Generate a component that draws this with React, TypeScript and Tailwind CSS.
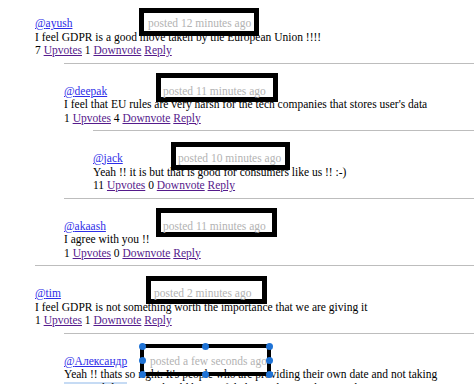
import { ReactNode } from "react";

interface IComment {
  id: string;
  user: string;
  text: ReactNode;
  upvotes: number;
  downvotes: number;
  replies?: IComment[];
}

// sample thread
const comments: IComment[] = [
  {
    id: "1",
    user: "ayush",
    text: "I feel GDPR is a good move taken by the European Union !!!!",
    upvotes: 7,
    downvotes: 1,
    replies: [
      {
        id: "2",
        user: "deepak",
        text: "I feel that EU rules are very harsh for the tech companies that stores user's data",
        upvotes: 1,
        downvotes: 4,
        replies: [
          {
            id: "3",
            user: "jack",
            text: "Yeah !! it is but that is good for consumers like us !! :-)",
            upvotes: 11,
            downvotes: 0,
          },
        ],
      },
      {
        id: "4",
        user: "akaash",
        text: "I agree with you !!",
        upvotes: 1,
        downvotes: 0,
      },
    ],
  },
  {
    id: "5",
    user: "tim",
    text: "I feel GDPR is not something worth the importance that we are giving it",
    upvotes: 1,
    downvotes: 1,
    replies: [
      {
        id: "6",
        user: "Александр",
        text: (
          <>
            Yeah !! thats so right. It's people who are providing their own date and not taking{" "}
            <span className="bg-[#c6dbf4]">responsibility</span> !! We should be careful about what we
            share on the internet
          </>
        ),
        upvotes: 3,
        downvotes: 0,
      },
    ],
  },
];

// annotation boxes drawn over the page
const boxes = [
  { id: "b1", pos: "left-[139px] top-[8px] w-[120px] h-[28px]", inner: "pl-[4px] pt-[4px]", label: "posted 12 minutes ago" },
  { id: "b2", pos: "left-[156px] top-[73px] w-[122px] h-[29px]", inner: "pl-[2px] pt-[6.5px]", label: "posted 11 minutes ago" },
  { id: "b3", pos: "left-[171px] top-[142px] w-[119px] h-[28px]", inner: "pl-[2px] pt-[5px]", label: "posted 10 minutes ago" },
  { id: "b4", pos: "left-[156px] top-[208px] w-[121px] h-[29px]", inner: "pl-[2px] pt-[6.5px]", label: "posted 11 minutes ago" },
  { id: "b5", pos: "left-[146px] top-[276px] w-[121px] h-[28px]", inner: "pl-[3px] pt-[6px]", label: "posted 2 minutes ago" },
];

const handles = [
  "-left-[5.5px] -top-[5.5px]",
  "left-[58px] -top-[5.5px]",
  "-right-[5.5px] -top-[5.5px]",
  "-left-[5.5px] top-[9px]",
  "-right-[5.5px] top-[9px]",
  "-left-[5.5px] -bottom-[5.5px]",
  "left-[58px] -bottom-[5.5px]",
  "-right-[5.5px] -bottom-[5.5px]",
];

function Comment({ comment, first }: { comment: IComment; first?: boolean }) {
  return (
    <div className={first ? "pt-[17px]" : "mt-[5px] border-t border-[#bdbdbd] pt-[21px]"}>
      <div>
        <a href="#" className="text-[#2d2de8] underline">
          @{comment.user}
        </a>
      </div>
      <div>{comment.text}</div>
      <div>
        {comment.upvotes}{" "}
        <a href="#" className="text-[#551a8b] underline">
          Upvotes
        </a>{" "}
        {comment.downvotes}{" "}
        <a href="#" className="text-[#551a8b] underline">
          Downvote
        </a>{" "}
        <a href="#" className="text-[#551a8b] underline">
          Reply
        </a>
      </div>
      {comment.replies && (
        <div className="ml-[29px]">
          {comment.replies.map((r) => (
            <Comment key={r.id} comment={r} />
          ))}
        </div>
      )}
    </div>
  );
}

export default function App() {
  return (
    <div className="relative h-[384px] w-full overflow-hidden bg-white pl-[35px] font-['Liberation_Serif',serif] text-[11.5px] leading-[13.5px] text-black">
      {comments.map((c, i) => (
        <Comment key={c.id} comment={c} first={i === 0} />
      ))}

      {boxes.map((b) => (
        <div key={b.id} className={`absolute border-[5px] border-black ${b.pos}`}>
          <div className={`whitespace-nowrap text-[#b3b3b3] ${b.inner}`}>{b.label}</div>
        </div>
      ))}

      {/* selected box with handles */}
      <div className="absolute left-[140px] top-[344px] h-[32px] w-[131px] border-[4px] border-black">
        <div className="whitespace-nowrap pl-[6px] pt-[6.5px] text-[#b3b3b3]">posted a few seconds ago</div>
        {handles.map((h) => (
          <span key={h} className={`absolute h-[7px] w-[7px] rounded-full bg-[#1f73d6] ${h}`} />
        ))}
      </div>
    </div>
  );
}
